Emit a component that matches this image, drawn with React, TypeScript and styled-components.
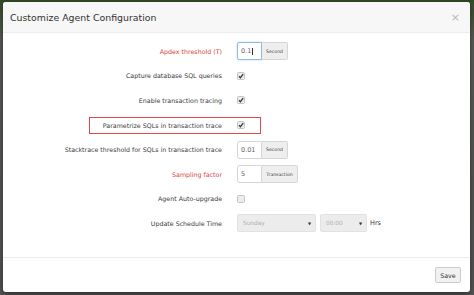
import React from 'react';
import styled, { createGlobalStyle, css } from 'styled-components';

const GlobalStyle = createGlobalStyle`
  html, body {
    margin: 0;
    padding: 0;
  }
  body {
    width: 474px;
    height: 295px;
    overflow: hidden;
    background: linear-gradient(180deg, #2f4a24 0px, #3d5030 6px, #5a5d58 40px, #555 100%);
    font-family: 'DejaVu Sans', Verdana, sans-serif;
  }
`;

type Row = {
  label: string;
  required?: boolean;
  highlight?: boolean;
  control: React.ReactNode;
};

export default function App(): JSX.Element {
  const rows: Row[] = [
    {
      label: 'Apdex threshold (T)',
      required: true,
      control: (
        <InputGroup>
          <TextInput focused>0.1<Caret /></TextInput>
          <Addon>Second</Addon>
        </InputGroup>
      ),
    },
    { label: 'Capture database SQL queries', control: <Checkbox checked /> },
    { label: 'Enable transaction tracing', control: <Checkbox checked /> },
    { label: 'Parametrize SQLs in transaction trace', highlight: true, control: <Checkbox checked /> },
    {
      label: 'Stacktrace threshold for SQLs in transaction trace',
      control: (
        <InputGroup>
          <TextInput>0.01</TextInput>
          <Addon>Second</Addon>
        </InputGroup>
      ),
    },
    {
      label: 'Sampling factor',
      required: true,
      control: (
        <InputGroup>
          <TextInput>5</TextInput>
          <Addon wide>Transaction</Addon>
        </InputGroup>
      ),
    },
    { label: 'Agent Auto-upgrade', control: <Checkbox /> },
    {
      label: 'Update Schedule Time',
      control: (
        <Schedule>
          <Select width={79}>
            <span>Sunday</span>
            <Arrow>▼</Arrow>
          </Select>
          <Select width={47}>
            <span>00:00</span>
            <Arrow>▼</Arrow>
          </Select>
          <Unit>Hrs</Unit>
        </Schedule>
      ),
    },
  ];

  return (
    <>
      <GlobalStyle />
      <Dialog>
        <Header>
          <Title>Customize Agent Configuration</Title>
          <Close>×</Close>
        </Header>
        <Body>
          {rows.map((row) => (
            <FormRow key={row.label} highlight={row.highlight}>
              <Label required={row.required}>{row.label}</Label>
              <Control>{row.control}</Control>
            </FormRow>
          ))}
        </Body>
        <Footer>
          <Button>Save</Button>
        </Footer>
      </Dialog>
    </>
  );
}

function Checkbox({ checked }: { checked?: boolean }) {
  return (
    <svg width="8" height="8" viewBox="0 0 8 8">
      <rect x="0.5" y="0.5" width="7" height="7" rx="1" fill="#ececec" stroke="#c4c4c4" />
      {checked && <path d="M2 4.2 L3.4 5.7 L6.2 2.1" fill="none" stroke="#3a3a3a" strokeWidth="1.3" />}
    </svg>
  );
}

const Dialog = styled.div`
  margin: 2px 4px 0 3px;
  width: 467px;
  height: 290px;
  background: #fff;
  border-radius: 3px;
  box-shadow: 0 2px 6px rgba(0, 0, 0, 0.5);
  display: flex;
  flex-direction: column;
  overflow: hidden;
`;

const Header = styled.div`
  height: 30px;
  flex: none;
  display: flex;
  align-items: center;
  justify-content: space-between;
  padding: 0 10px 0 7px;
  background: #f7f7f7;
  border-bottom: 1px solid #ececec;
`;

const Title = styled.div`
  font-size: 9.4px;
  color: #333;
`;

const Close = styled.div`
  font-size: 11px;
  color: #b8b8b8;
  line-height: 1;
`;

const Body = styled.div`
  flex: 1;
  padding-top: 6px;
  display: grid;
  grid-auto-rows: 24.6px;
  align-content: start;
`;

const FormRow = styled.div<{ highlight?: boolean }>`
  position: relative;
  display: grid;
  grid-template-columns: 219px 1fr;
  column-gap: 15px;
  align-items: center;

  ${(p) =>
    p.highlight &&
    css`
      &::after {
        content: '';
        position: absolute;
        left: 86px;
        width: 170px;
        top: 4px;
        bottom: 3px;
        border: 1px solid #e0474f;
        pointer-events: none;
      }
    `}
`;

const Label = styled.div<{ required?: boolean }>`
  text-align: right;
  font-size: 6.3px;
  white-space: nowrap;
  color: ${(p) => (p.required ? '#d9413b' : '#3a3a3a')};
`;

const Control = styled.div`
  display: flex;
  align-items: center;
`;

const InputGroup = styled.div`
  display: flex;
  height: 18px;
`;

const TextInput = styled.div<{ focused?: boolean }>`
  width: 25px;
  box-sizing: border-box;
  display: flex;
  align-items: center;
  padding-left: 3px;
  font-size: 6.5px;
  color: #666;
  border: 1px solid ${(p) => (p.focused ? '#8fbbe6' : '#d6d6d6')};
  border-radius: 2px 0 0 2px;
  box-shadow: ${(p) => (p.focused ? '0 0 2px rgba(102, 175, 233, 0.6)' : 'none')};
`;

const Caret = styled.span`
  display: inline-block;
  width: 1px;
  height: 7px;
  margin-left: 1px;
  background: #333;
`;

const Addon = styled.div<{ wide?: boolean }>`
  width: ${(p) => (p.wide ? 36 : 26)}px;
  box-sizing: border-box;
  display: flex;
  align-items: center;
  justify-content: center;
  font-size: 4.6px;
  color: #444;
  background: #eee;
  border: 1px solid #d6d6d6;
  border-left: none;
  border-radius: 0 2px 2px 0;
`;

const Schedule = styled.div`
  display: flex;
  align-items: center;
  gap: 4px;
`;

const Select = styled.div<{ width: number }>`
  width: ${(p) => p.width}px;
  height: 18px;
  box-sizing: border-box;
  display: flex;
  align-items: center;
  justify-content: space-between;
  padding: 0 4px 0 5px;
  font-size: 5.8px;
  color: #b0b0b0;
  background: #ececec;
  border: 1px solid #e2e2e2;
  border-radius: 2px;
`;

const Arrow = styled.span`
  font-size: 4px;
  color: #333;
`;

const Unit = styled.span`
  font-size: 6.5px;
  color: #333;
  margin-left: -1px;
`;

const Footer = styled.div`
  height: 34px;
  flex: none;
  border-top: 1px solid #ececec;
  display: flex;
  align-items: center;
  justify-content: flex-end;
  padding-right: 9px;
`;

const Button = styled.div`
  width: 26px;
  height: 16px;
  box-sizing: border-box;
  display: flex;
  align-items: center;
  justify-content: center;
  font-size: 6.3px;
  color: #333;
  background: #f2f2f2;
  border: 1px solid #ccc;
  border-radius: 2px;
`;
